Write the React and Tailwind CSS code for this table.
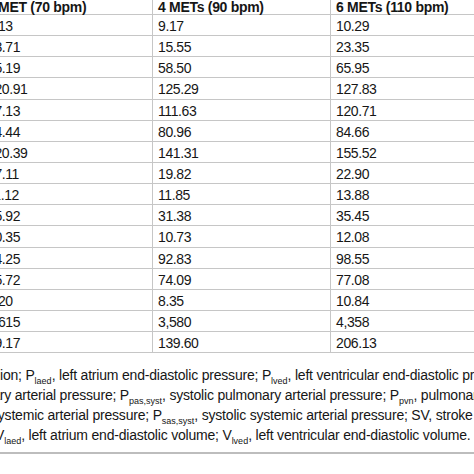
const rows = [
  ["8.13", "9.17", "10.29"],
  ["13.71", "15.55", "23.35"],
  ["55.19", "58.50", "65.95"],
  ["120.91", "125.29", "127.83"],
  ["97.13", "111.63", "120.71"],
  ["74.44", "80.96", "84.66"],
  ["120.39", "141.31", "155.52"],
  ["17.11", "19.82", "22.90"],
  ["11.12", "11.85", "13.88"],
  ["25.92", "31.38", "35.45"],
  ["10.35", "10.73", "12.08"],
  ["84.25", "92.83", "98.55"],
  ["65.72", "74.09", "77.08"],
  ["6.20", "8.35", "10.84"],
  ["2,615", "3,580", "4,358"],
  ["99.17", "139.60", "206.13"],
];

function Row({ cells, bold }) {
  const txt = bold
    ? "font-bold pt-[5px] tracking-[-0.3px]"
    : "pt-[3px] tracking-[-0.4px]";
  return (
    <div className="flex h-[21.15px] border-b border-[#c6c6c6]">
      <div className={`w-[171px] shrink-0 border-r border-[#c6c6c6] pl-[5px] leading-[17px] ${txt}`}>
        {cells[0]}
      </div>
      <div className={`w-[178px] shrink-0 border-r border-[#c6c6c6] pl-[5px] leading-[17px] ${txt}`}>
        {cells[1]}
      </div>
      <div className={`w-[300px] shrink-0 pl-[5px] leading-[17px] ${txt}`}>
        {cells[2]}
      </div>
    </div>
  );
}

function Sub({ children }) {
  return <sub className="text-[9px] align-[-2px] leading-none tracking-normal">{children}</sub>;
}

export default function App() {
  return (
    <div className="w-[474px] h-[474px] overflow-hidden bg-white text-[#161616] text-[14px] font-['Liberation_Sans',Arial,sans-serif]">
      <div className="-ml-[18px] -mt-[6.2px] w-[660px]">
        <Row cells={["1 MET (70 bpm)", "4 METs (90 bpm)", "6 METs (110 bpm)"]} bold />
        {rows.map((r, i) => (
          <Row key={i} cells={r} />
        ))}
      </div>
      <div className="w-[474px] pt-[12px] pb-[7px] border-b-2 border-[#bdbdbd] leading-[20px] whitespace-nowrap tracking-[-0.2px]">
        <div>
          ion; P<Sub>laed</Sub>, left atrium end-diastolic pressure; P<Sub>lved</Sub>, left ventricular end-diastolic pressure;
        </div>
        <div className="-ml-[7.8px]">
          ary arterial pressure; P<Sub>pas,syst</Sub>, systolic pulmonary arterial pressure; P<Sub>pvn</Sub>, pulmonary venous pressure;
        </div>
        <div className="-ml-[9px]">
          systemic arterial pressure; P<Sub>sas,syst</Sub>, systolic systemic arterial pressure; SV, stroke volume;
        </div>
        <div className="-ml-[5px]">
          V<Sub>laed</Sub>, left atrium end-diastolic volume; V<Sub>lved</Sub>, left ventricular end-diastolic volume.
        </div>
      </div>
    </div>
  );
}
